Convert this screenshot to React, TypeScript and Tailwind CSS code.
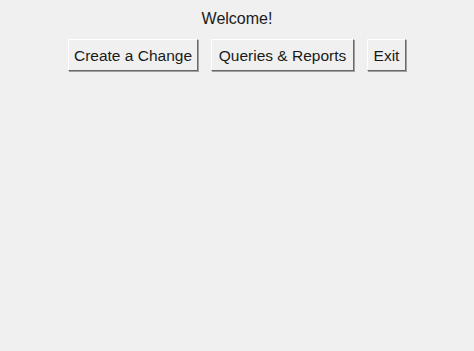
const buttons = [
  { label: "Create a Change", w: "w-[130px]" },
  { label: "Queries & Reports", w: "w-[143px]" },
  { label: "Exit", w: "w-[39px]" },
];

const App = () => {
  return (
    <div className="w-[474px] h-[351px] bg-[#f0f0f0] font-['Liberation_Sans',Arial,sans-serif] text-[#1a1a1a] flex flex-col items-center">
      <div className="mt-[8px] h-[22px] text-[16px] leading-[22px]">Welcome!</div>
      <div className="mt-[9px] flex items-center gap-[13px]">
        {buttons.map((b) => (
          <button
            key={b.label}
            className={`${b.w} h-[32px] pt-[1px] text-[15.5px] leading-[18px] text-center bg-[#f0f0f0] border border-t-white border-l-white border-r-[#696969] border-b-[#696969] shadow-[1px_1px_0_#a0a0a0]`}
          >
            {b.label}
          </button>
        ))}
      </div>
    </div>
  );
};

export default App;
